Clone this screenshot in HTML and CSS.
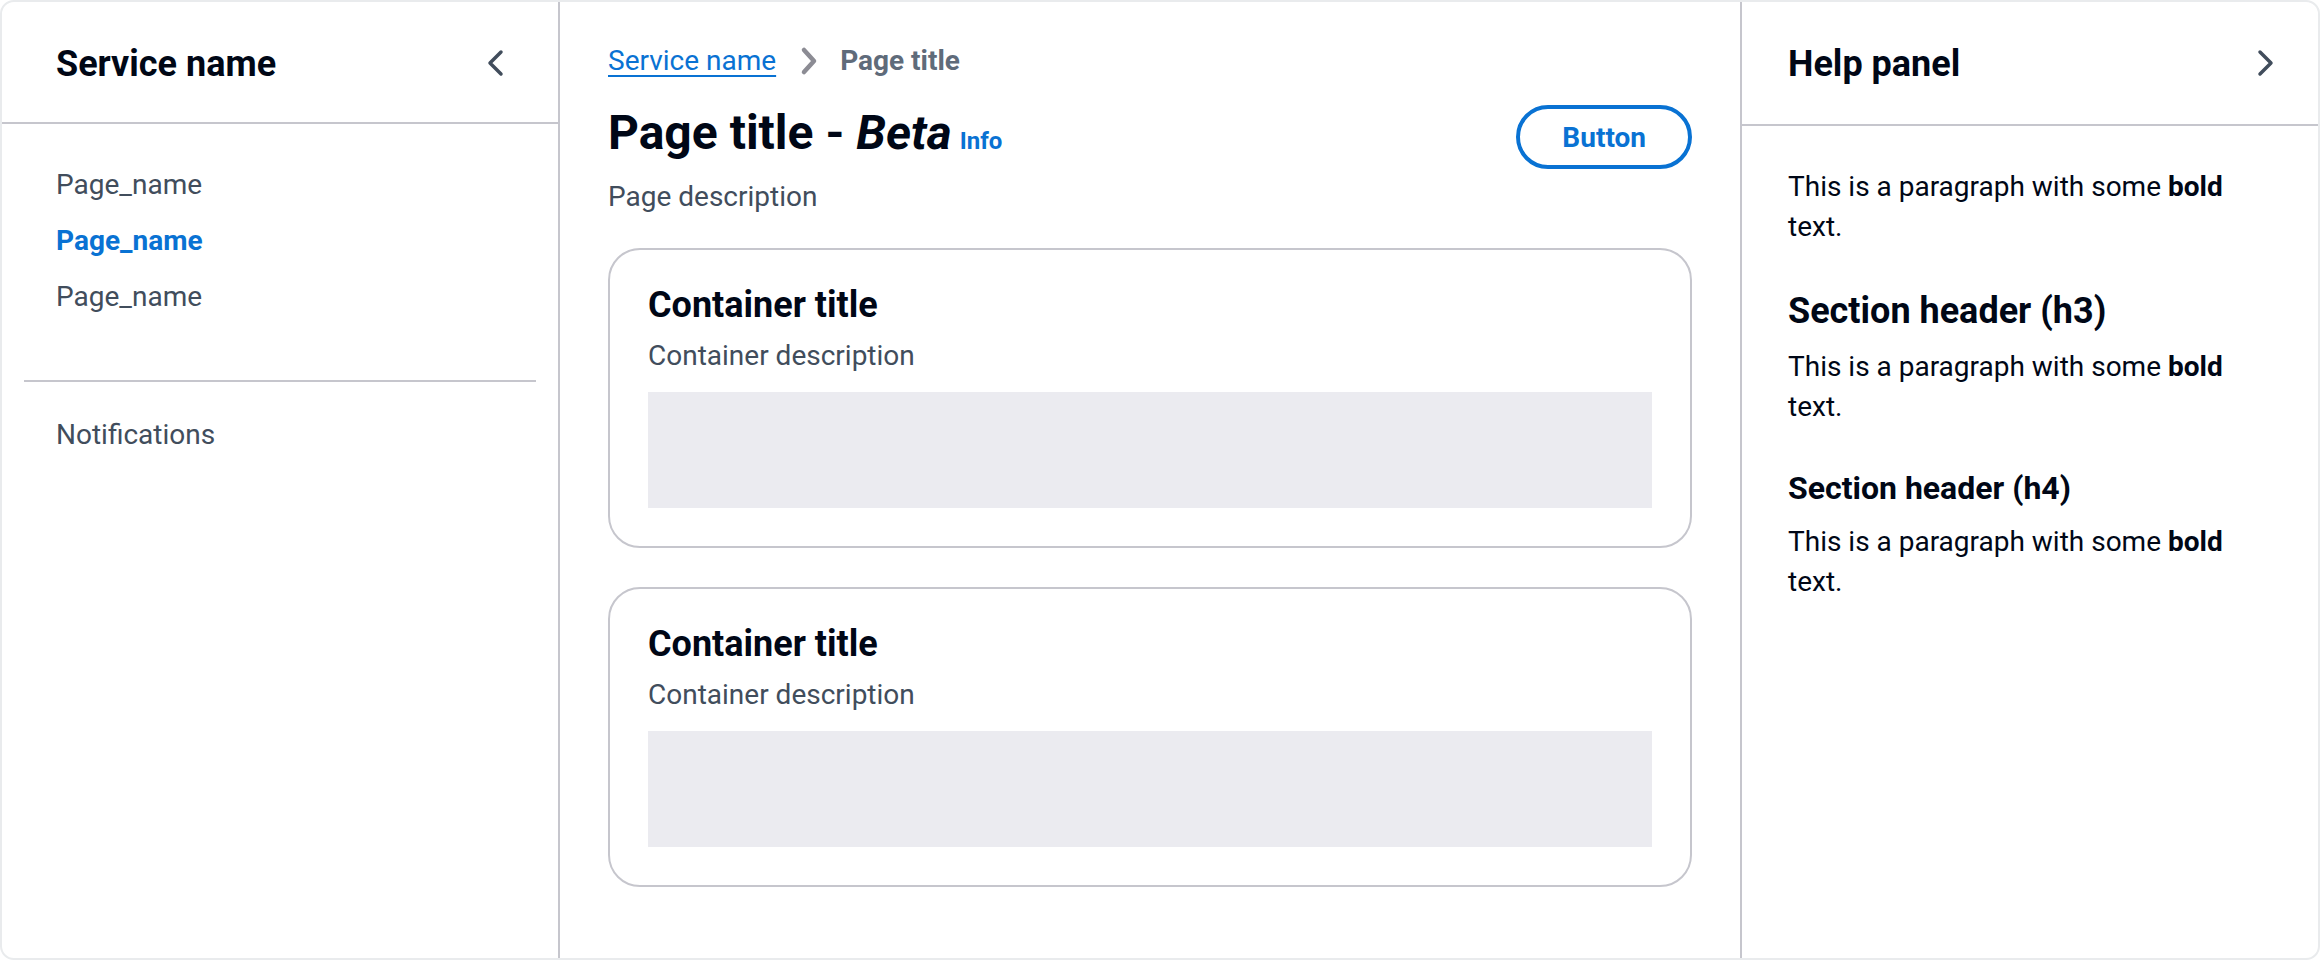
FILE: index.html
```html
<!DOCTYPE html>
<html lang="en">
<head>
  <meta charset="UTF-8" />
  <meta name="viewport" content="width=device-width, initial-scale=1.0"/>
  <title>Page title</title>
  <link rel="stylesheet" href="styles.css">
</head>
<body>
  <div class="app">
    <!-- side navigation -->
    <nav class="side-nav">
      <div class="panel-header nav-header">
        <h2>Service name</h2>
        <button class="icon-btn" aria-label="Close navigation">
          <svg width="32" height="32" viewBox="0 0 32 32"><path d="M21 5 10 16l11 11" /></svg>
        </button>
      </div>
      <ul class="nav-list">
        <li>Page_name</li>
        <li class="active">Page_name</li>
        <li>Page_name</li>
      </ul>
      <hr class="nav-divider">
      <ul class="nav-list nav-list-bottom">
        <li>Notifications</li>
      </ul>
    </nav>

    <!-- main content -->
    <main class="content">
      <div class="breadcrumbs">
        <a href="#">Service name</a>
        <svg class="crumb-sep" width="32" height="32" viewBox="0 0 32 32"><path d="M12 5l10 11-10 11" /></svg>
        <span class="crumb-current">Page title</span>
      </div>

      <div class="page-header">
        <h1>Page title - <em>Beta</em><a href="#" class="info">Info</a></h1>
        <button class="btn">Button</button>
      </div>
      <p class="page-desc">Page description</p>

      <section class="box">
        <h2>Container title</h2>
        <p class="box-desc">Container description</p>
        <div class="placeholder"></div>
      </section>

      <section class="box">
        <h2>Container title</h2>
        <p class="box-desc">Container description</p>
        <div class="placeholder"></div>
      </section>
    </main>

    <!-- help panel -->
    <aside class="help">
      <div class="panel-header help-header">
        <h2>Help panel</h2>
        <button class="icon-btn" aria-label="Close help panel">
          <svg width="32" height="32" viewBox="0 0 32 32"><path d="M11 5l11 11-11 11" /></svg>
        </button>
      </div>
      <div class="help-body">
        <p>This is a paragraph with some <b>bold</b> text.</p>
        <h3>Section header (h3)</h3>
        <p>This is a paragraph with some <b>bold</b> text.</p>
        <h4>Section header (h4)</h4>
        <p>This is a paragraph with some <b>bold</b> text.</p>
      </div>
    </aside>
  </div>
</body>
</html>
```

FILE: styles.css
```css
* {
  box-sizing: border-box;
}
body {
  margin: 0;
  font-family: Roboto, "Noto Sans", sans-serif;
  font-size: 28px;
  line-height: 40px;
  color: #000716;
  background: #fff;
}
.app {
  display: grid;
  grid-template-columns: 558px 1180px 578px;
  height: 960px;
  border: 2px solid #e9ebed;
  border-radius: 14px;
  overflow: hidden;
}

/* panels */
.panel-header {
  display: flex;
  align-items: center;
  justify-content: space-between;
  border-bottom: 2px solid #c6c6cd;
}
.panel-header h2 {
  margin: 0;
  font-size: 36px;
  line-height: 44px;
  font-weight: 700;
}
.icon-btn {
  width: 32px;
  height: 32px;
  padding: 0;
  border: none;
  background: none;
  margin-top: -3px;
}
.icon-btn svg,
.crumb-sep {
  display: block;
  fill: none;
  stroke-width: 3.5;
  stroke-linecap: round;
  stroke-linejoin: round;
}
.icon-btn svg {
  stroke: #414d5c;
}

/* side nav */
.side-nav {
  border-right: 2px solid #c6c6cd;
}
.nav-header {
  padding: 40px 46px 36px 54px;
}
.nav-list {
  list-style: none;
  margin: 0;
  padding: 33px 0 0 54px;
  color: #414d5c;
}
.nav-list li {
  padding: 8px 0;
}
.nav-list li.active {
  color: #0972d3;
  font-weight: 700;
}
.nav-divider {
  border: none;
  border-top: 2px solid #c6c6cd;
  margin: 55px 22px 0;
}
.nav-list-bottom {
  padding-top: 25px;
}

/* main */
.content {
  padding: 39px 48px 0;
}
.breadcrumbs {
  display: flex;
  align-items: center;
  gap: 16px;
}
.breadcrumbs a {
  color: #0972d3;
  text-decoration: underline;
  text-decoration-thickness: 2px;
  text-underline-offset: 5px;
}
.crumb-sep {
  stroke: #8c8c94;
  stroke-width: 4.5;
}
.crumb-current {
  color: #5f6b7a;
  font-weight: 700;
}
.page-header {
  display: flex;
  align-items: center;
  justify-content: space-between;
  margin-top: 22px;
}
.page-header h1 {
  margin: 0;
  font-size: 48px;
  line-height: 60px;
  font-weight: 700;
}
.info {
  margin-left: 8px;
  font-size: 24px;
  color: #0972d3;
  text-decoration: none;
}
.btn {
  height: 64px;
  padding: 0 42px;
  border: 4px solid #0972d3;
  border-radius: 40px;
  background: #fff;
  color: #0972d3;
  font-family: inherit;
  font-size: 28px;
  font-weight: 700;
}
.page-desc {
  margin: 6px 0 0;
  color: #414d5c;
}

/* containers */
.box {
  margin-top: 31px;
  border: 2px solid #c6c6cd;
  border-radius: 32px;
  padding: 33px 38px 38px;
}
.box + .box {
  margin-top: 39px;
}
.box h2 {
  margin: 0;
  font-size: 36px;
  line-height: 44px;
  font-weight: 700;
}
.box-desc {
  margin: 9px 0 0;
  color: #414d5c;
}
.placeholder {
  margin-top: 16px;
  height: 116px;
  background: #ebebf0;
}

/* help panel */
.help {
  border-left: 2px solid #c6c6cd;
}
.help-header {
  padding: 40px 37px 38px 46px;
}
.help-body {
  padding: 41px 46px 0;
}
.help-body p {
  margin: 0;
}
.help-body h3 {
  margin: 42px 0 0;
  font-size: 36px;
  line-height: 44px;
}
.help-body h4 {
  margin: 41px 0 0;
  font-size: 32px;
  line-height: 40px;
}
.help-body h3 + p,
.help-body h4 + p {
  margin-top: 14px;
}
```
